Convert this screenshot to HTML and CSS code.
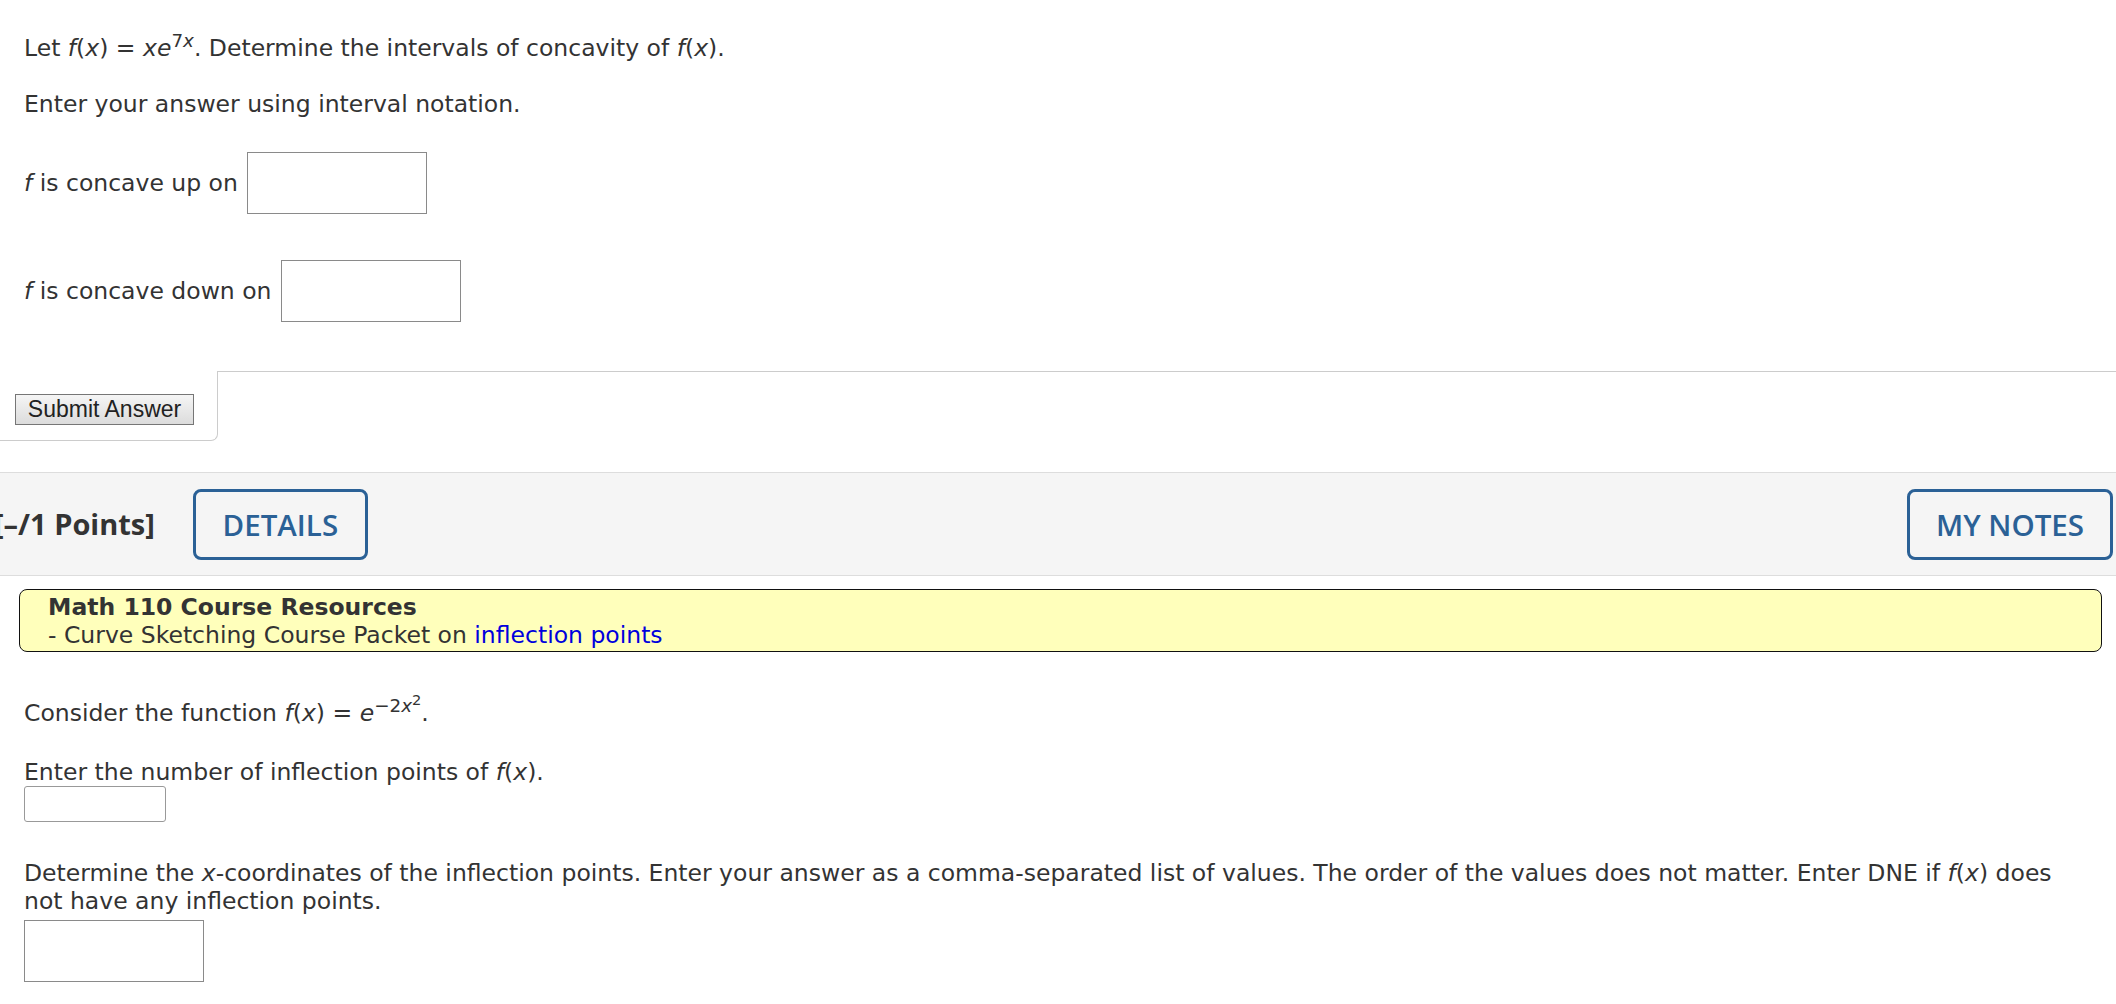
FILE: index.html
```html
<!DOCTYPE html>
<html lang="en">
<head>
<meta charset="UTF-8">
<title>Concavity</title>
<link rel="stylesheet" href="styles.css">
</head>
<body>

<div class="question">
  <p class="first">Let <i>f</i>(<i>x</i>) = <i>xe</i><sup>7<i>x</i></sup>. Determine the intervals of concavity of <i>f</i>(<i>x</i>).</p>
  <p class="note">Enter your answer using interval notation.</p>

  <div class="answer-row up">
    <span><i>f</i> is concave up on</span>
    <input type="text" class="box">
  </div>
  <div class="answer-row down">
    <span><i>f</i> is concave down on</span>
    <input type="text" class="box">
  </div>
</div>

<div class="submit-row">
  <div class="submit-cell">
    <button type="button" class="submit-btn">Submit Answer</button>
  </div>
  <div class="submit-rest"></div>
</div>

<div class="points-bar">
  <span class="points">[–/1 Points]</span>
  <button type="button" class="outline-btn">DETAILS</button>
  <button type="button" class="outline-btn notes">MY NOTES</button>
</div>

<div class="resources">
  <b>Math 110 Course Resources</b><br>
  - Curve Sketching Course Packet on <a href="#">inflection points</a>
</div>

<div class="question">
  <p class="consider">Consider the function <i>f</i>(<i>x</i>) = <i>e</i><sup>−2<i>x</i><sup>2</sup></sup>.</p>
  <p class="count">Enter the number of inflection points of <i>f</i>(<i>x</i>).</p>
  <input type="text" class="small-box">

  <p class="coords">Determine the <i>x</i>-coordinates of the inflection points. Enter your answer as a comma-separated list of values. The order of the values does not matter. Enter DNE if <i>f</i>(<i>x</i>) does not have any inflection points.</p>
  <input type="text" class="box">
</div>

</body>
</html>
```

FILE: styles.css
```css
body {
  margin: 0;
  font-family: "DejaVu Sans", Verdana, sans-serif;
  font-size: 23.5px;
  line-height: 28px;
  color: #333;
  background: #fff;
}
p {
  margin: 0;
}
i {
  font-style: italic;
}
sup {
  font-size: 0.78em;
  line-height: 0;
  vertical-align: 0.5em;
}
sup sup {
  font-size: 0.8em;
  vertical-align: 0.45em;
}
.question {
  padding: 0 24px;
}
.first {
  padding-top: 34px;
}
.note {
  margin-top: 28px;
}
.answer-row {
  display: flex;
  align-items: center;
  gap: 9px;
}
.answer-row.up {
  margin-top: 34px;
}
.answer-row.down {
  margin-top: 46px;
}
.box {
  width: 180px;
  height: 62px;
  box-sizing: border-box;
  border: 1px solid #8a8a8a;
  background: #fff;
  margin: 0;
  padding: 0;
}
/* barra do botao de envio */
.submit-row {
  display: flex;
  margin-top: 49px;
}
.submit-cell {
  width: 218px;
  height: 70px;
  border-right: 1px solid #ccc;
  border-bottom: 1px solid #ccc;
  border-bottom-right-radius: 7px;
  padding: 23px 0 0 15px;
  box-sizing: border-box;
}
.submit-rest {
  flex: 1;
  border-top: 1px solid #ccc;
}
.submit-btn {
  font-family: "Liberation Sans", Arial, sans-serif;
  font-size: 23px;
  color: #222;
  height: 31px;
  width: 179px;
  padding: 0;
  border: 1px solid #767676;
  background: linear-gradient(#f5f5f5, #dcdcdc);
  line-height: 27px;
}
.points-bar {
  display: flex;
  align-items: center;
  margin-top: 31px;
  height: 102px;
  background: #f5f5f5;
  border-top: 1px solid #ddd;
  border-bottom: 1px solid #ddd;
  padding-right: 3px;
}
.points {
  font-family: "Open Sans", sans-serif;
  font-weight: 700;
  font-size: 29px;
  color: #333;
  margin-left: -6px;
}
.outline-btn {
  font-family: "Open Sans", sans-serif;
  font-weight: 600;
  font-size: 29.5px;
  color: #2b6196;
  background: transparent;
  border: 3px solid #2b6196;
  border-radius: 8px;
  height: 71px;
  width: 175px;
  margin-left: 38px;
  padding: 0;
}
.outline-btn.notes {
  margin-left: auto;
  width: 206px;
}
.resources {
  margin: 13px 14px 0 19px;
  padding: 3px 28px 2px;
  background: #ffffbb;
  border: 1px solid #111;
  border-radius: 8px;
}
.resources a {
  color: #0000dd;
  text-decoration: none;
}
.consider {
  margin-top: 47px;
}
.count {
  margin-top: 31px;
}
.small-box {
  display: block;
  width: 142px;
  height: 36px;
  box-sizing: border-box;
  border: 1px solid #999;
  border-radius: 3px;
  margin: 0;
}
.coords {
  margin-top: 37px;
  margin-bottom: 5px;
}
.question > .box {
  display: block;
}
```
